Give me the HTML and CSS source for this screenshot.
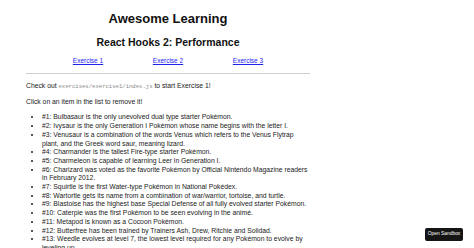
FILE: index.html
```html
<!DOCTYPE html>
<html>
<head>
<meta charset="utf-8">
<link rel="stylesheet" href="styles.css">
</head>
<body>
<div class="page">
  <header class="header">
    <h1 class="title">Awesome Learning</h1>
    <h2 class="subtitle">React Hooks 2: Performance</h2>
    <nav class="nav">
      <a class="nav-link" href="#">Exercise 1</a>
      <a class="nav-link" href="#">Exercise 2</a>
      <a class="nav-link" href="#">Exercise 3</a>
    </nav>
  </header>
  <hr class="rule">
  <p class="text">Check out <code class="code">exercises/exercise1/index.js</code> to start Exercise 1!</p>
  <p class="text">Click on an item in the list to remove it!</p>
  <ul class="list">
    <li>#1: Bulbasaur is the only unevolved dual type starter Pokémon.</li>
    <li>#2: Ivysaur is the only Generation I Pokémon whose name begins with the letter I.</li>
    <li>#3: Venusaur is a combination of the words Venus which refers to the Venus Flytrap plant, and the Greek word saur, meaning lizard.</li>
    <li>#4: Charmander is the tallest Fire-type starter Pokémon.</li>
    <li>#5: Charmeleon is capable of learning Leer in Generation I.</li>
    <li>#6: Charizard was voted as the favorite Pokémon by Official Nintendo Magazine readers in February 2012.</li>
    <li>#7: Squirtle is the first Water-type Pokémon in National Pokédex.</li>
    <li>#8: Wartortle gets its name from a combination of war/warrior, tortoise, and turtle.</li>
    <li>#9: Blastoise has the highest base Special Defense of all fully evolved starter Pokémon.</li>
    <li>#10: Caterpie was the first Pokémon to be seen evolving in the animé.</li>
    <li>#11: Metapod is known as a Cocoon Pokémon.</li>
    <li>#12: Butterfree has been trained by Trainers Ash, Drew, Ritchie and Solidad.</li>
    <li>#13: Weedle evolves at level 7, the lowest level required for any Pokémon to evolve by leveling up.</li>
  </ul>
</div>
<a class="sandbox-btn" href="#">Open Sandbox</a>
</body>
</html>
```
FILE: styles.css
```css
html, body {
  margin: 0;
  padding: 0;
  background: #fff;
  overflow: hidden;
}
body {
  font-family: "Liberation Sans", Arial, sans-serif;
  color: #222;
  font-size: 6.8px;
  line-height: 8.7px;
}
.page {
  width: 284px;
  margin-left: 26px;
  padding-top: 10.5px;
}
.header {
  display: flex;
  flex-direction: column;
  align-items: center;
}
.title {
  margin: 0;
  font-size: 13px;
  line-height: 15px;
  font-weight: bold;
  color: #111;
}
.subtitle {
  margin: 10.5px 0 0;
  font-size: 10.5px;
  line-height: 12px;
  font-weight: bold;
  color: #111;
}
.nav {
  display: flex;
  justify-content: center;
  margin-top: 9px;
  font-size: 6.5px;
}
.nav-link {
  width: 80px;
  text-align: center;
  color: #2222ee;
  text-decoration: underline;
}
.rule {
  margin: 7px 0 0;
  border: 0;
  border-top: 1px solid #cfcfcf;
  height: 0;
}
.text {
  margin: 8px 0 0;
}
.text + .text {
  margin-top: 6.3px;
}
.code {
  font-family: "Liberation Mono", "Courier New", monospace;
  font-size: 5.6px;
  color: #888;
}
.list {
  margin: 7px -2px 0 0;
  padding-left: 16px;
}
.sandbox-btn {
  position: fixed;
  right: 11px;
  bottom: 7px;
  width: 38px;
  height: 13px;
  display: flex;
  align-items: center;
  justify-content: center;
  background: #151515;
  color: #fff;
  border-radius: 2px;
  font-size: 4.9px;
  text-decoration: none;
  box-sizing: border-box;
  white-space: nowrap;
}
```
